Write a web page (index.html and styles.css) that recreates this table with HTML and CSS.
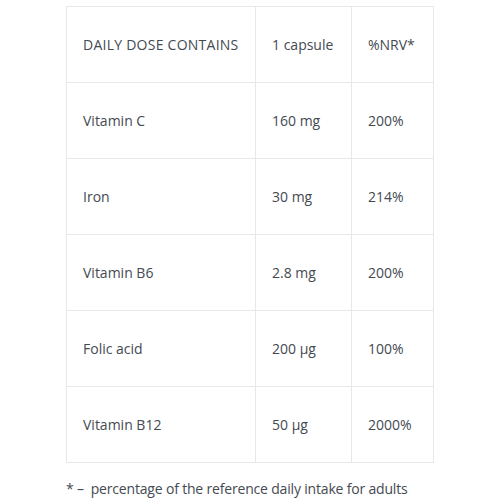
FILE: index.html
```html
<!DOCTYPE html>
<html>
<head>
<meta charset="utf-8">
<link rel="stylesheet" href="styles.css">
</head>
<body>
<div class="wrap">
  <table class="dose">
    <tr><td class="c1 head">DAILY DOSE CONTAINS</td><td class="c2">1 capsule</td><td class="c3">%NRV*</td></tr>
    <tr><td>Vitamin C</td><td>160 mg</td><td>200%</td></tr>
    <tr><td>Iron</td><td>30 mg</td><td>214%</td></tr>
    <tr><td>Vitamin B6</td><td>2.8 mg</td><td>200%</td></tr>
    <tr><td>Folic acid</td><td>200 µg</td><td>100%</td></tr>
    <tr><td>Vitamin B12</td><td>50 µg</td><td>2000%</td></tr>
  </table>
  <p class="note">* –&nbsp; percentage of the reference daily intake for adults</p>
</div>
</body>
</html>
```
FILE: styles.css
```css
html, body { margin: 0; padding: 0; background: #fff; }
body { font-family: "Open Sans", "Noto Sans", sans-serif; color: #444a52; font-size: 14px; }
.wrap { padding: 6px 0 0 66px; }
.dose { border-collapse: collapse; width: 368px; table-layout: fixed; }
.dose td { border: 1px solid #e8e8e8; padding: 0 0 0 16px; vertical-align: middle; box-sizing: border-box; height: 76px; }
.c1 { width: 189px; }
.c2 { width: 96px; }
.c3 { width: 82px; }
.head { letter-spacing: 0.25px; }
.note { margin: 16px 0 0 0; line-height: 20px; letter-spacing: -0.18px; }
```
